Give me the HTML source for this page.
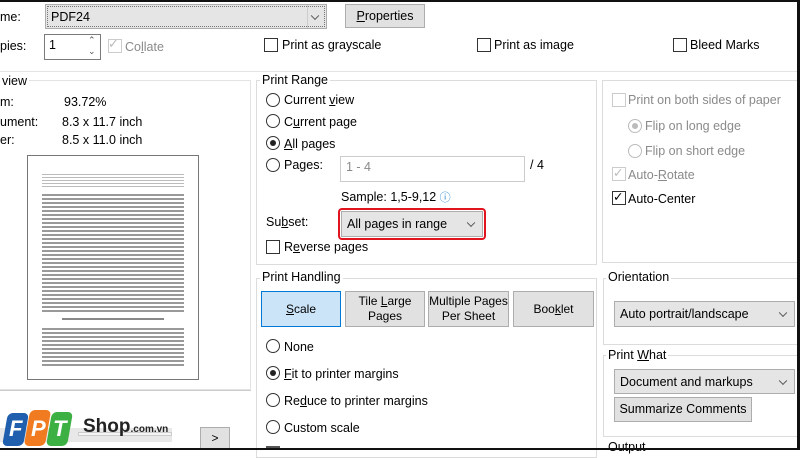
<!DOCTYPE html>
<html><head><meta charset="utf-8"><style>
*{box-sizing:border-box;margin:0;padding:0}
body{width:800px;height:450px;overflow:hidden;background:#fff;font-family:"Liberation Sans",sans-serif;font-size:12.5px;color:#000;position:relative}
.a{position:absolute;white-space:nowrap}
.gb{position:absolute;border:1px solid #dcdcdc}
.gt{position:absolute;background:#fff;padding:0 2px;font-size:12.5px}
.cb{position:absolute;width:14px;height:14px;border:1px solid #333;background:#fff}
.cb.d{border-color:#ccc}
.rd{position:absolute;width:14px;height:14px;border:1px solid #333;border-radius:50%;background:#fff}
.rd.on::after{content:"";position:absolute;left:3px;top:3px;width:6px;height:6px;border-radius:50%;background:#222}
.rd.d{border-color:#bbb}
.rd.d.on::after{background:#bbb}
.btn{position:absolute;background:#e1e1e1;border:1px solid #adadad;text-align:center;display:flex;align-items:center;justify-content:center;line-height:15px;font-size:12px}
.dd{position:absolute;background:#e5e5e5;border:1px solid #adadad;padding-left:5px;display:flex;align-items:center}
.chev{position:absolute;right:8px;top:50%;width:6px;height:6px;border-right:1px solid #555;border-bottom:1px solid #555;transform:translateY(-70%) rotate(45deg)}
.g{color:#8a8a8a}
</style></head><body>
<div class="a" style="left:0;top:10px">me:</div>
<div class="dd" style="left:45px;top:4px;width:282px;height:25px;outline:1px dotted #777;outline-offset:-3px">PDF24<div style="position:absolute;left:261px;top:0;width:1px;height:23px;background:#ccc"></div><span class="chev"></span></div>
<div class="btn" style="left:345px;top:4px;width:80px;height:24px;font-size:12.5px"><span><u>P</u>roperties</span></div>

<div class="a" style="left:0;top:39px">pies:</div>
<div class="a" style="left:44px;top:34px;width:57px;height:26px;border:1px solid #7a7a7a;padding:3px 0 0 4px">1</div>
<div class="a" style="left:88px;top:35px;font-size:9px;color:#555">&#8963;</div>
<div class="a" style="left:88px;top:46px;font-size:9px;color:#555">&#8964;</div>
<div class="cb d" style="left:108px;top:39px"></div><div class="a" style="left:108px;top:36px;color:#bbb;font-size:13px">✓</div>
<div class="a g" style="left:125px;top:40px">Co<u>l</u>late</div>
<div class="cb" style="left:264px;top:38px"></div><div class="a" style="left:282px;top:38px">Print as grayscale</div>
<div class="cb" style="left:477px;top:38px"></div><div class="a" style="left:494px;top:38px">Print as image</div>
<div class="cb" style="left:673px;top:38px"></div><div class="a" style="left:690px;top:38px">Bleed Marks</div>
<div class="a" style="left:0;top:71px;width:800px;height:1px;background:#e3e3e3"></div>

<!-- left preview -->
<div class="gb" style="left:-2px;top:80px;width:253px;height:310px;border-color:#e3e3e3"></div>
<div class="gt" style="left:0;top:74px">view</div>
<div class="a" style="left:0;top:95px">m:</div><div class="a" style="left:64px;top:95px">93.72%</div>
<div class="a" style="left:0;top:115px">ument:</div><div class="a" style="left:62px;top:115px">8.3 x 11.7 inch</div>
<div class="a" style="left:0;top:133px">er:</div><div class="a" style="left:62px;top:133px">8.5 x 11.0 inch</div>
<div class="a" style="left:27px;top:155px;width:172px;height:225px;border:1px solid #777;background:#fff;padding:16px 14px">
<div style="height:16px;background:repeating-linear-gradient(#fff 0 2px,#bbb 2px 3px)"></div>
<div style="margin-top:4px;height:120px;background:repeating-linear-gradient(#fff 0 2px,#999 2px 4px)"></div>
<div style="margin:4px 20px;height:6px;background:repeating-linear-gradient(#fff 0 2px,#888 2px 4px)"></div>
<div style="height:42px;background:repeating-linear-gradient(#fff 0 2px,#999 2px 4px)"></div>
</div>
<div class="a" style="left:0;top:390px;width:251px;height:1px;background:#ccc"></div>
<div class="a" style="left:0;top:428px;width:172px;height:14px;background:#e8e8e8"></div>
<div class="a" style="left:78px;top:432px;width:94px;height:4px;border:1px solid #ccc;background:#f4f4f4"></div>
<div class="btn" style="left:200px;top:427px;width:30px;height:23px">&gt;</div>
<!-- logo -->
<div class="a" style="left:5px;top:413px;width:21px;height:33px;background:#1f5fae;border-radius:5px;transform:skewX(-10deg)"></div>
<div class="a" style="left:27px;top:410px;width:21px;height:36px;background:#f07b20;border-radius:5px;transform:skewX(-10deg)"></div>
<div class="a" style="left:49px;top:412px;width:21px;height:34px;background:#3cb043;border-radius:5px;transform:skewX(-10deg)"></div>
<div class="a" style="left:9px;top:416px;color:#fff;font-weight:bold;font-style:italic;font-size:22px">F</div>
<div class="a" style="left:31px;top:416px;color:#fff;font-weight:bold;font-style:italic;font-size:22px">P</div>
<div class="a" style="left:53px;top:416px;color:#fff;font-weight:bold;font-style:italic;font-size:22px">T</div>
<div class="a" style="left:83px;top:416px;color:#222;font-weight:bold;font-size:19px">Shop<span style="font-size:10px;font-weight:bold">.com.vn</span></div>

<!-- print range -->
<div class="gb" style="left:256px;top:80px;width:341px;height:185px"></div>
<div class="gt" style="left:260px;top:73px">Print Range</div>
<div class="rd" style="left:266px;top:93px"></div><div class="a" style="left:284px;top:93px">Current <u>v</u>iew</div>
<div class="rd" style="left:266px;top:114px"></div><div class="a" style="left:284px;top:115px">C<u>u</u>rrent page</div>
<div class="rd on" style="left:266px;top:136px"></div><div class="a" style="left:284px;top:137px"><u>A</u>ll pages</div>
<div class="rd" style="left:266px;top:158px"></div><div class="a" style="left:284px;top:158px">Pages:</div>
<div class="a g" style="left:340px;top:156px;width:185px;height:26px;border:1px solid #ccc;padding:3px 0 0 5px">1 - 4</div>
<div class="a" style="left:530px;top:158px">/ 4</div>
<div class="a" style="left:341px;top:189px">Sample: 1,5-9,12 <span style="color:#2a8ad8;font-size:11px">ⓘ</span></div>
<div class="a" style="left:266px;top:215px">Su<u>b</u>set:</div>
<div class="a" style="left:338px;top:208px;width:148px;height:32px;border:2px solid #e0141e;border-radius:4px"></div>
<div class="dd" style="left:341px;top:211px;width:142px;height:26px">All pages in range<span class="chev"></span></div>
<div class="cb" style="left:266px;top:240px"></div><div class="a" style="left:284px;top:240px">R<u>e</u>verse pages</div>

<!-- right top -->
<div class="gb" style="left:602px;top:80px;width:200px;height:183px"></div>
<div class="cb d" style="left:612px;top:93px"></div><div class="a g" style="left:628px;top:93px">Print on both sides of paper</div>
<div class="rd d on" style="left:628px;top:119px"></div><div class="a g" style="left:645px;top:119px">Flip on long edge</div>
<div class="rd d" style="left:628px;top:144px"></div><div class="a g" style="left:645px;top:144px">Flip on short edge</div>
<div class="cb d" style="left:612px;top:167px"></div><div class="a" style="left:613px;top:165px;color:#bbb">✓</div><div class="a g" style="left:628px;top:168px">Auto-<u>R</u>otate</div>
<div class="cb" style="left:612px;top:191px"></div><div class="a" style="left:613px;top:189px">✓</div><div class="a" style="left:628px;top:192px">Auto-Center</div>

<!-- print handling -->
<div class="gb" style="left:256px;top:278px;width:341px;height:180px"></div>
<div class="gt" style="left:260px;top:270px">Print Handling</div>
<div class="btn" style="left:261px;top:291px;width:80px;height:36px;background:#cce4f7;border-color:#0078d7"><span><u>S</u>cale</span></div>
<div class="btn" style="left:345px;top:291px;width:80px;height:36px"><span>Tile <u>L</u>arge<br>Pages</span></div>
<div class="btn" style="left:428px;top:291px;width:81px;height:36px"><span>Multiple Pages<br>Per Sheet</span></div>
<div class="btn" style="left:513px;top:291px;width:81px;height:36px"><span>Boo<u>k</u>let</span></div>
<div class="rd" style="left:266px;top:339px"></div><div class="a" style="left:284px;top:340px">None</div>
<div class="rd on" style="left:266px;top:366px"></div><div class="a" style="left:284px;top:367px"><u>F</u>it to printer margins</div>
<div class="rd" style="left:266px;top:393px"></div><div class="a" style="left:284px;top:394px">Re<u>d</u>uce to printer margins</div>
<div class="rd" style="left:266px;top:420px"></div><div class="a" style="left:284px;top:421px">Custom scale</div>
<div class="a" style="left:266px;top:446px;width:14px;height:2px;background:#555"></div>

<!-- orientation -->
<div class="gb" style="left:603px;top:278px;width:200px;height:67px"></div>
<div class="gt" style="left:606px;top:270px">Orientation</div>
<div class="dd" style="left:614px;top:301px;width:181px;height:26px">Auto portrait/landscape<span class="chev"></span></div>
<div class="gb" style="left:603px;top:355px;width:200px;height:82px"></div>
<div class="gt" style="left:606px;top:348px">Print <u>W</u>hat</div>
<div class="dd" style="left:614px;top:369px;width:181px;height:25px">Document and markups<span class="chev"></span></div>
<div class="btn" style="left:614px;top:397px;width:138px;height:25px;font-size:12.5px">Summarize Comments</div>
<div class="gt" style="left:606px;top:440px">Output</div>

<!-- frame -->
<div class="a" style="left:0;top:0;width:800px;height:2px;background:#111"></div>
<div class="a" style="left:797px;top:0;width:3px;height:450px;background:#111"></div>
<div class="a" style="left:0;top:448px;width:800px;height:2px;background:#111"></div>
</body></html>
